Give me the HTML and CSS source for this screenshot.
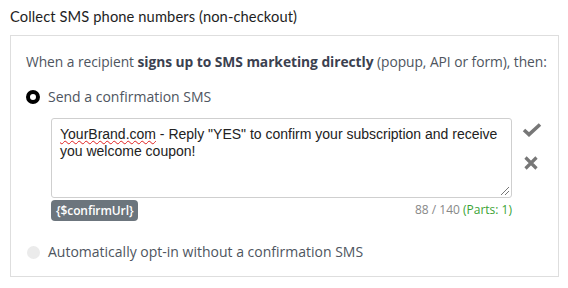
FILE: index.html
```html
<!DOCTYPE html>
<html>
<head>
<meta charset="utf-8">
<link rel="stylesheet" href="styles.css">
</head>
<body>
<div class="page">
  <h2 class="title">Collect SMS phone numbers (non-checkout)</h2>
  <div class="box">
    <p class="intro">When a recipient <b>signs up to SMS marketing directly</b> (popup, API or form), then:</p>
    <label class="option">
      <span class="radio checked"></span>
      <span class="label">Send a confirmation SMS</span>
    </label>
    <div class="editor">
      <div class="field">
        <div class="textarea"><span class="spell">YourBrand.com</span> - Reply "YES" to confirm your subscription and receive you welcome coupon!<span class="grip"></span></div>
        <div class="under">
          <span class="badge">{$confirmUrl}</span>
          <span class="count">88 / 140 <span class="parts">(Parts: 1)</span></span>
        </div>
      </div>
      <div class="actions">
        <svg class="icon" width="20" height="16" viewBox="0 0 20 16"><path d="M2 8 L7 12.5 L18 2.5" fill="none" stroke="#777" stroke-width="3.6" stroke-linecap="butt" stroke-linejoin="miter"/></svg>
        <svg class="icon x" width="16" height="16" viewBox="0 0 16 16"><path d="M2.5 2.5 L13.5 13.5 M13.5 2.5 L2.5 13.5" fill="none" stroke="#777" stroke-width="3.2"/></svg>
      </div>
    </div>
    <label class="option second">
      <span class="radio"></span>
      <span class="label">Automatically opt-in without a confirmation SMS</span>
    </label>
  </div>
</div>
</body>
</html>
```
FILE: styles.css
```css
* { box-sizing: border-box; }
html, body { margin: 0; background: #fff; }
.page { padding: 7px 10px 0 10px; width: 568px; }
.title {
  margin: 0 0 10px 0;
  font-family: "Lato", "Open Sans", sans-serif;
  font-weight: 400;
  font-size: 14.7px;
  line-height: 18px;
  color: #1e1e1e;
  letter-spacing: 0.1px;
}
.box {
  border: 1px solid #dedede;
  width: 549px;
  height: 242px;
  padding: 16px 5px 0 15px;
  font-family: "Open Sans", sans-serif;
  color: #4e5560;
}
.intro {
  margin: 0;
  font-size: 13.8px;
  line-height: 20px;
  letter-spacing: -0.05px;
}
.intro b { font-weight: 700; color: #3b4150; }
.option {
  display: flex;
  align-items: center;
  gap: 8px;
  margin-top: 15px;
  font-size: 14px;
  line-height: 20px;
}
.radio {
  width: 14px;
  height: 14px;
  border-radius: 50%;
  background: #ebebeb;
  flex: none;
}
.radio.checked {
  background: #fff;
  border: 4px solid #000;
}
.editor {
  display: flex;
  margin: 11px 0 0 25px;
}
.field { width: 461px; flex: none; }
.textarea {
  position: relative;
  height: 80px;
  border: 1px solid #cfcfcf;
  border-radius: 3px;
  padding: 7px 8px;
  font-family: "Liberation Sans", Arial, sans-serif;
  font-size: 14px;
  line-height: 17px;
  color: #222;
}
.spell {
  text-decoration: underline wavy #e02020;
  text-decoration-thickness: 1px;
  text-underline-offset: 1px;
}
.grip {
  position: absolute;
  right: 2px;
  bottom: 2px;
  width: 8px;
  height: 8px;
  background: linear-gradient(135deg, transparent 45%, #777 45%, #777 52%, transparent 52%, transparent 70%, #777 70%, #777 77%, transparent 77%);
}
.under {
  display: flex;
  justify-content: space-between;
  align-items: flex-start;
  margin-top: 2px;
}
.badge {
  background: #6c757d;
  color: #fff;
  font-size: 12px;
  font-weight: 600;
  line-height: 21px;
  padding: 0 5px;
  border-radius: 4px;
  letter-spacing: -0.1px;
}
.count {
  font-size: 12px;
  line-height: 18px;
  color: #888;
  padding-top: 1px;
}
.parts { color: #3aa335; }
.actions {
  display: flex;
  flex-direction: column;
  align-items: center;
  width: 40px;
  flex: none;
  padding-top: 4px;
  gap: 17px;
}
.icon.x { margin-left: -3px; }
.option.second { margin-top: 21px; margin-left: 1px; }
.option.second .radio { width: 13px; height: 13px; }
```
